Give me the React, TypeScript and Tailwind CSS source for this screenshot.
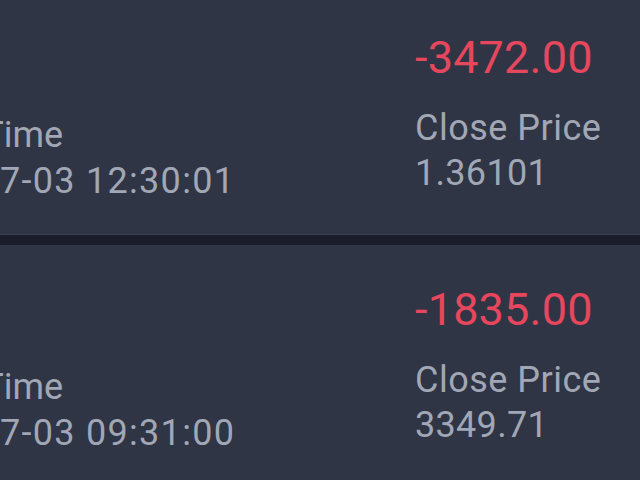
import React from "react";

type Trade = { pnl: string; date: string; price: string };

const trades: Trade[] = [
  { pnl: "-3472.00", date: "2024-07-03 12:30:01", price: "1.36101" },
  { pnl: "-1835.00", date: "2024-07-03 09:31:00", price: "3349.71" },
];

function Card({ t }: { t: Trade }) {
  return (
    <div className="flex shrink-0 h-[242px] bg-[#2f3545] border-b border-[#3a4051] overflow-hidden">
      <div className="ml-[-119px] w-[534px] shrink-0 pt-[124px] flex flex-col">
        <div className="ml-[9px] text-[36px] leading-none text-[#a1a7b5] whitespace-nowrap">Open Time</div>
        <div className="mt-[10px] text-[36px] leading-none tracking-[1.3px] text-[#a1a7b5] whitespace-nowrap">{t.date}</div>
      </div>
      <div className="pt-[42px] flex flex-col">
        <div className="text-[45px] leading-none tracking-[0.2px] text-[#e6475d]">{t.pnl}</div>
        <div className="mt-[30px] text-[36px] leading-none tracking-[0.5px] text-[#a1a7b5] whitespace-nowrap">Close Price</div>
        <div className="mt-[9px] text-[36px] leading-none tracking-[0.3px] text-[#a1a7b5]">{t.price}</div>
      </div>
    </div>
  );
}

export default function App() {
  return (
    <div
      className="w-[640px] h-[480px] overflow-hidden bg-[#1a1e2b] flex flex-col gap-[10px]"
      style={{ fontFamily: "Roboto, 'Liberation Sans', sans-serif" }}
    >
      <div className="mt-[-7px]">
        <Card t={trades[0]} />
      </div>
      <Card t={trades[1]} />
    </div>
  );
}
